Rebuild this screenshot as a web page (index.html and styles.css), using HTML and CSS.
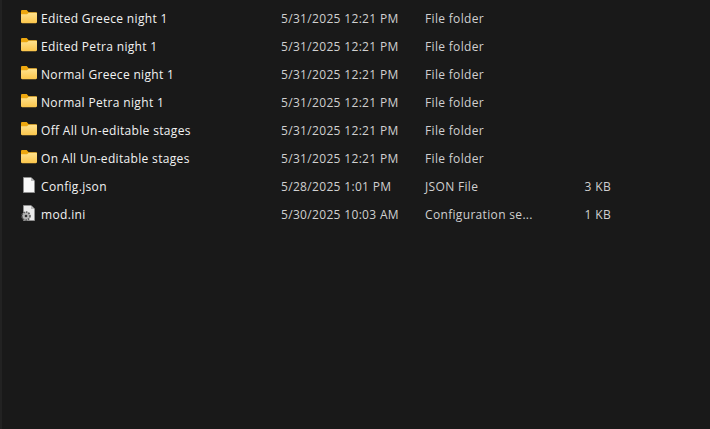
FILE: index.html
```html
<!DOCTYPE html>
<html lang="en">

<head>
    <meta charset="UTF-8">
    <title>Files</title>
    <link rel="stylesheet" href="styles.css">
</head>

<body>
    <svg class="defs" width="0" height="0">
        <defs>
            <linearGradient id="folderFront" x1="0" y1="0" x2="0" y2="1">
                <stop offset="0" stop-color="#ffe28e" />
                <stop offset="1" stop-color="#fcc64a" />
            </linearGradient>
            <symbol id="folder" viewBox="0 0 16 16">
                <path d="M0 2.200C0 1.500.6 1 1.300 1h4.400l2 2.200H15c.6 0 1 .4 1 1V7H0z" fill="#eda70f" />
                <path d="M0 5.300h6l1.800-1.500H15c.6 0 1 .4 1 1v8.300c0 .7-.5 1.200-1.200 1.200H1.200C.5 14.300 0 13.800 0 13.100z" fill="url(#folderFront)" />
            </symbol>
            <symbol id="file" viewBox="0 0 16 16">
                <path d="M2.500 .5H10L13.500 4V15.500H2.500z" fill="#f8f8f8" stroke="#8f8f8f" />
                <path d="M10 .5V4H13.500z" fill="#b9b9b9" />
            </symbol>
            <symbol id="config" viewBox="0 0 16 16">
                <path d="M2.500 .5H10L13.500 4V15.500H2.500z" fill="#ececec" stroke="#8f8f8f" />
                <path d="M10 .5V4H13.500z" fill="#b9b9b9" />
                <circle cx="5" cy="11" r="4" fill="#b5b5b5" stroke="#5a5a5a" stroke-width="1.600" stroke-dasharray="1.600 1" />
                <circle cx="5" cy="11" r="1.300" fill="#333" />
            </symbol>
        </defs>
    </svg>

    <div class="list">
        <div class="row">
            <svg class="icon"><use href="#folder" /></svg>
            <span class="name">Edited Greece night 1</span>
            <span>5/31/2025 12:21 PM</span>
            <span>File folder</span>
            <span class="size"></span>
        </div>
        <div class="row">
            <svg class="icon"><use href="#folder" /></svg>
            <span class="name">Edited Petra night 1</span>
            <span>5/31/2025 12:21 PM</span>
            <span>File folder</span>
            <span class="size"></span>
        </div>
        <div class="row">
            <svg class="icon"><use href="#folder" /></svg>
            <span class="name">Normal Greece night 1</span>
            <span>5/31/2025 12:21 PM</span>
            <span>File folder</span>
            <span class="size"></span>
        </div>
        <div class="row">
            <svg class="icon"><use href="#folder" /></svg>
            <span class="name">Normal Petra night 1</span>
            <span>5/31/2025 12:21 PM</span>
            <span>File folder</span>
            <span class="size"></span>
        </div>
        <div class="row">
            <svg class="icon"><use href="#folder" /></svg>
            <span class="name">Off All Un-editable stages</span>
            <span>5/31/2025 12:21 PM</span>
            <span>File folder</span>
            <span class="size"></span>
        </div>
        <div class="row">
            <svg class="icon"><use href="#folder" /></svg>
            <span class="name">On All Un-editable stages</span>
            <span>5/31/2025 12:21 PM</span>
            <span>File folder</span>
            <span class="size"></span>
        </div>
        <div class="row">
            <svg class="icon"><use href="#file" /></svg>
            <span class="name">Config.json</span>
            <span>5/28/2025 1:01 PM</span>
            <span>JSON File</span>
            <span class="size">3 KB</span>
        </div>
        <div class="row">
            <svg class="icon"><use href="#config" /></svg>
            <span class="name">mod.ini</span>
            <span>5/30/2025 10:03 AM</span>
            <span>Configuration se...</span>
            <span class="size">1 KB</span>
        </div>
    </div>
</body>

</html>
```

FILE: styles.css
```css
html, body {
    height: 100%;
}

body {
    margin: 0;
    border-left: 2px solid #222222;
    background-color: #191919;
    color: #d0d0d0;
    font-family: "Open Sans", "Noto Sans", sans-serif;
    font-size: 12px;
    letter-spacing: 0.33px;
    overflow: hidden;
}

.defs {
    display: block;
    height: 0;
}

.list {
    padding: 4px 0 0 19px;
}

.row {
    display: grid;
    grid-template-columns: 20px 240px 144px 130px 56px;
    align-items: center;
    height: 28px;
    white-space: nowrap;
}

.icon {
    width: 16px;
    height: 16px;
    margin-top: -2px;
}

.name {
    color: #f2f2f2;
}

.size {
    text-align: right;
}
```
